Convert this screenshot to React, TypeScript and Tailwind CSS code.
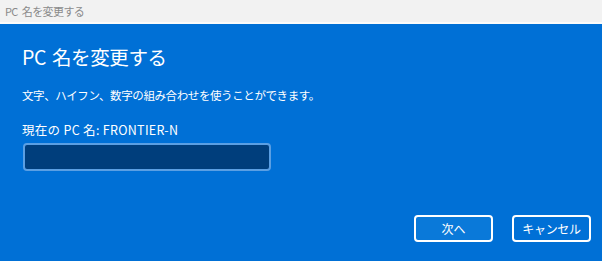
import React from "react";

const jp = { fontFamily: '"Noto Sans CJK JP", "Noto Sans", sans-serif' };

const RenameDialog = ({ currentName }: { currentName: string }) => {
  return (
    <div className="w-[602px] h-[261px] flex flex-col overflow-hidden" style={jp}>
      <div className="h-[24px] bg-[#f2f2f2] flex items-center px-[5px] border-b-2 border-[#fbfbfb]">
        <p className="text-[11px] text-[#8a8a8a] tracking-[-0.6px]">
          <span className="mr-[4px]">PC</span>名を変更する
        </p>
      </div>
      <section className="flex-1 bg-[#0070d6] text-white flex flex-col pl-[22px] pr-[11px]">
        <h1 className="mt-[20px] text-[19.5px] leading-[26px] font-normal tracking-[-0.4px]">
          <span className="mr-[6px]">PC</span>名を変更する
        </h1>
        <p className="mt-[17px] text-[11.5px] leading-[16px] tracking-[-0.4px]">
          文字、ハイフン、数字の組み合わせを使うことができます。
        </p>
        <p className="mt-[19px] text-[12.5px] leading-[16px] tracking-[0.3px]">現在の PC 名: {currentName}</p>
        <div className="mt-[5px] ml-[1px] w-[248px] h-[28px] rounded-[4px] bg-[#003e7c] border-2 border-[#5b9fe3]" />
        <div className="mt-auto mb-[19px] flex justify-end gap-[19px]">
          <button className="w-[79px] h-[27px] rounded-[4px] border-2 border-white bg-[#0a79d9] text-[12px] text-white">
            次へ
          </button>
          <button className="w-[79px] h-[27px] rounded-[4px] border-2 border-white bg-[#0070d6] text-[12px] text-white tracking-[-0.3px]">
            キャンセル
          </button>
        </div>
      </section>
    </div>
  );
};

export default function App() {
  return <RenameDialog currentName="FRONTIER-N" />;
}
